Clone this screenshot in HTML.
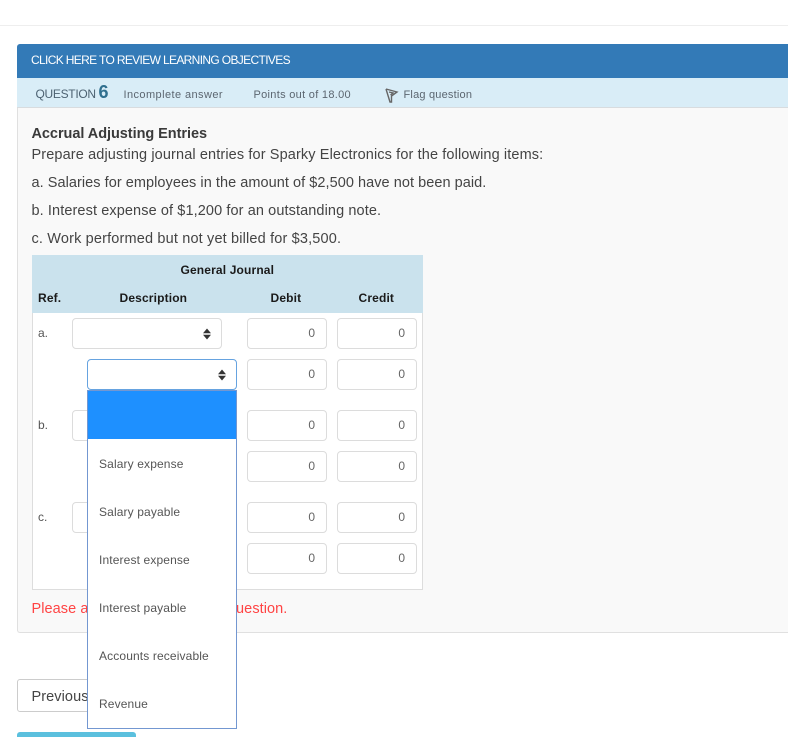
<!DOCTYPE html>
<html><head><meta charset="utf-8">
<style>
html,body{margin:0;padding:0;background:#fff;}
body{width:788px;height:737px;position:relative;overflow:hidden;font-family:"Liberation Sans",sans-serif;color:#555;}
.a{position:absolute;}
.t{position:absolute;white-space:nowrap;line-height:20px;}
.p{font-size:14.5px;color:#444;letter-spacing:.08px;}
.m{font-size:11px;color:#5c6670;letter-spacing:.3px;}
.h{font-size:12px;font-weight:bold;color:#1a1a1a;letter-spacing:.15px;}
.i{position:absolute;width:78px;height:29px;border:1px solid #dcdcdc;border-radius:4px;background:#fff;text-align:right;font-size:12px;line-height:29px;color:#666;box-sizing:content-box;}
.i span{margin-right:11px;}
.s{position:absolute;width:148px;height:29px;border:1px solid #dcdcdc;border-radius:4px;background:#fff;}
.o{font-size:12px;color:#555;letter-spacing:.13px;left:99px;}
</style></head><body>
<div class="a" style="left:0;top:25px;width:788px;height:1px;background:#eee"></div>
<div class="a" style="left:17px;top:44px;width:771px;height:589px;background:#f9f9f9;border:1px solid #e0e0e0;border-right:0;border-radius:3px 0 0 3px;box-sizing:border-box"></div>
<div class="a" style="left:17px;top:44px;width:771px;height:34px;background:#337ab7;border-radius:3px 0 0 0"></div>
<div class="t" style="left:31px;top:50px;font-size:12px;color:#fff;letter-spacing:-.65px">CLICK HERE TO REVIEW LEARNING OBJECTIVES</div>
<div class="a" style="left:17px;top:78px;width:771px;height:30px;background:#d9edf7;border-bottom:1px solid #d8dcdf;box-sizing:border-box"></div>
<div class="t" style="left:35.5px;top:84px;font-size:12px;color:#4d6272;letter-spacing:-.3px">QUESTION</div>
<div class="t" style="left:98.5px;top:82px;font-size:18px;font-weight:bold;color:#31708f">6</div>
<div class="t m" style="left:123.5px;top:85px;letter-spacing:.42px">Incomplete answer</div>
<div class="t m" style="left:253.5px;top:85px">Points out of 18.00</div>
<svg class="a" style="left:385px;top:88px" width="14" height="15" viewBox="0 0 14 15"><path d="M1 1L12 4L6.5 8L6.5 14L5 14L1 1M4 4L8 5L5.5 7" fill="none" stroke="#666" stroke-width="1.4"/></svg>
<div class="t m" style="left:403.5px;top:85px;letter-spacing:.2px">Flag question</div>

<div class="t" style="left:31.5px;top:124px;font-size:14.5px;font-weight:bold;color:#3a3a3a;letter-spacing:-.05px">Accrual Adjusting Entries</div>
<div class="t p" style="left:31.5px;top:145px;letter-spacing:.12px">Prepare adjusting journal entries for Sparky Electronics for the following items:</div>
<div class="t p" style="left:31.5px;top:173px;letter-spacing:.05px">a. Salaries for employees in the amount of $2,500 have not been paid.</div>
<div class="t p" style="left:31.5px;top:201px;letter-spacing:.1px">b. Interest expense of $1,200 for an outstanding note.</div>
<div class="t p" style="left:31.5px;top:229px;letter-spacing:.16px">c. Work performed but not yet billed for $3,500.</div>

<div class="a" style="left:32px;top:255px;width:391px;height:335px;background:#fff;border:1px solid #ddd;border-top:0;box-sizing:border-box"></div>
<div class="a" style="left:32px;top:255px;width:391px;height:58px;background:#cae2ed"></div>
<div class="t h" style="left:180.5px;top:260px">General Journal</div>
<div class="t h" style="left:38px;top:288px">Ref.</div>
<div class="t h" style="left:119.5px;top:288px">Description</div>
<div class="t h" style="left:270.5px;top:288px">Debit</div>
<div class="t h" style="left:358.5px;top:288px">Credit</div>

<div class="t" style="left:38px;top:323px;font-size:12px;color:#555">a.</div>
<div class="t" style="left:38px;top:415px;font-size:12px;color:#555">b.</div>
<div class="t" style="left:38px;top:507px;font-size:12px;color:#555">c.</div>

<div class="s" style="left:72px;top:318px"><svg class="a" style="left:130px;top:9px" width="8" height="12" viewBox="0 0 8 12"><path d="M4 0.5L8 5.3H0ZM0 6.7H8L4 11.5Z" fill="#333"/></svg></div>
<div class="s" style="left:72px;top:410px"></div>
<div class="s" style="left:72px;top:502px"></div>
<div class="s" style="left:87px;top:359px;border-color:#66a3e0"><svg class="a" style="left:130px;top:9px" width="8" height="12" viewBox="0 0 8 12"><path d="M4 0.5L8 5.3H0ZM0 6.7H8L4 11.5Z" fill="#333"/></svg></div>

<div class="i" style="left:247px;top:318px"><span>0</span></div><div class="i" style="left:337px;top:318px"><span>0</span></div>
<div class="i" style="left:247px;top:359px"><span>0</span></div><div class="i" style="left:337px;top:359px"><span>0</span></div>
<div class="i" style="left:247px;top:410px"><span>0</span></div><div class="i" style="left:337px;top:410px"><span>0</span></div>
<div class="i" style="left:247px;top:451px"><span>0</span></div><div class="i" style="left:337px;top:451px"><span>0</span></div>
<div class="i" style="left:247px;top:502px"><span>0</span></div><div class="i" style="left:337px;top:502px"><span>0</span></div>
<div class="i" style="left:247px;top:543px"><span>0</span></div><div class="i" style="left:337px;top:543px"><span>0</span></div>

<div class="t" style="left:31.5px;top:599px;font-size:14.5px;color:#f44;letter-spacing:.07px">Please answer all parts of the question.</div>

<div class="a" style="left:17px;top:679px;width:120px;height:33px;background:#fff;border:1px solid #ccc;border-radius:3px;box-sizing:border-box"></div>
<div class="t" style="left:31.5px;top:687px;font-size:14.5px;color:#444;letter-spacing:.08px">Previous</div>
<div class="a" style="left:17px;top:732px;width:119px;height:5px;background:#5bc0de;border-radius:3px 3px 0 0"></div>

<div class="a" style="left:87px;top:390px;width:150px;height:339px;background:#fff;border:1px solid #7397d1;box-sizing:border-box"></div>
<div class="a" style="left:88px;top:391px;width:148px;height:48px;background:#1e90ff"></div>
<div class="t o" style="top:454px">Salary expense</div>
<div class="t o" style="top:502px">Salary payable</div>
<div class="t o" style="top:550px">Interest expense</div>
<div class="t o" style="top:598px">Interest payable</div>
<div class="t o" style="top:646px">Accounts receivable</div>
<div class="t o" style="top:694px">Revenue</div>
</body></html>
